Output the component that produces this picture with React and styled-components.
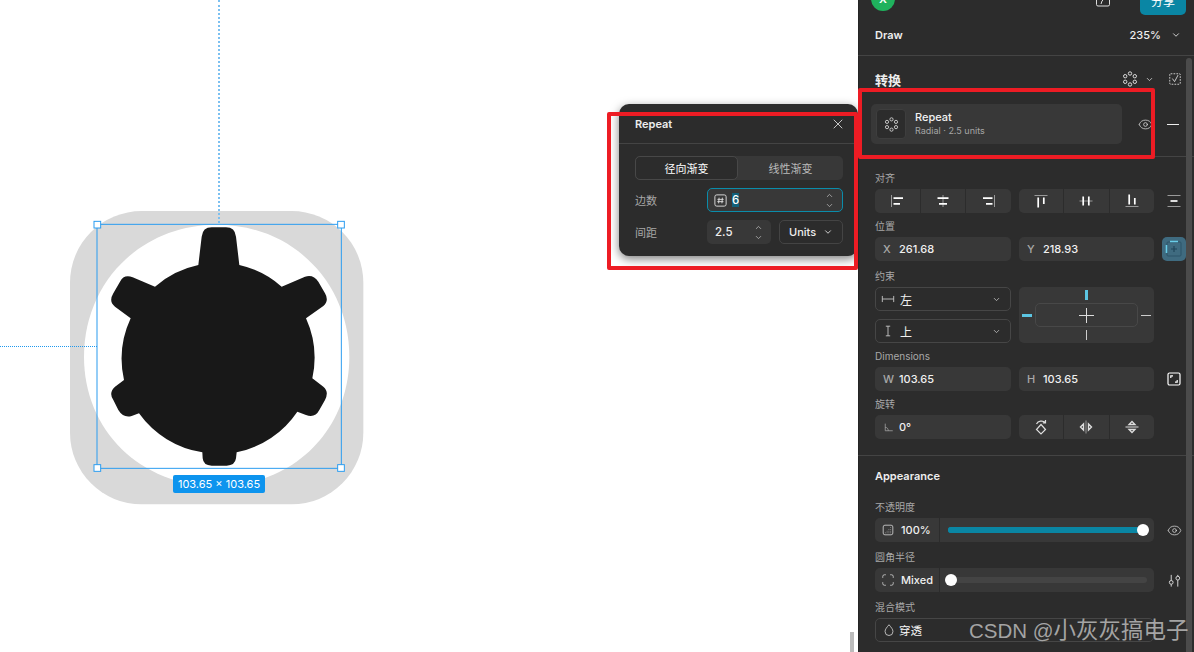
import styled, { createGlobalStyle } from "styled-components";
import { ChevronDown, ChevronUp, Eye, X } from "lucide-react";

const GlobalStyle = createGlobalStyle`
  html, body { margin: 0; padding: 0; height: 100%; background: #fff; overflow: hidden; }
  * { box-sizing: border-box; }
  #root { height: 100%; }
  body { font-family: Inter, "Noto Sans CJK SC", sans-serif; -webkit-font-smoothing: antialiased; }
`;

const Ico = ({ size = 16, children, sw = 1 }) => (
  <svg width={size} height={size} viewBox="0 0 16 16" fill="none" stroke="currentColor" strokeWidth={sw} style={{ flex: "none", display: "block" }}>
    {children}
  </svg>
);

const RadialIcon = ({ size = 16 }) => (
  <Ico size={size}>
    {[[8, 2.5], [12.8, 5.2], [12.8, 10.8], [8, 13.5], [3.2, 10.8], [3.2, 5.2]].map(([cx, cy]) => (
      <circle key={cx + "-" + cy} cx={cx} cy={cy} r="1.7" />
    ))}
  </Ico>
);

const Rule = ({ d }) => <path d={d} stroke="#999" strokeWidth="1" />;
const Bars = ({ d }) => <path d={d} stroke="#fff" strokeWidth="1.7" />;

const icons = {
  alignLeft: <><Rule d="M2.5 2v12" /><Bars d="M4.5 5.2h9.5M4.5 10.800h6.500" /></>,
  alignCenterH: <><Rule d="M8 2v12" /><Bars d="M2.500 5.200h11M4 10.800h8" /></>,
  alignRight: <><Rule d="M13.500 2v12" /><Bars d="M2 5.200h9.500M5 10.800h6.500" /></>,
  alignTop: <><Rule d="M1.500 2.500h13" /><Bars d="M5.200 4.500v10M10.800 4.500v6.500" /></>,
  alignCenterV: <><Rule d="M1.500 8h13" /><Bars d="M5.200 3.500v9M10.800 3.500v9" /></>,
  alignBottom: <><Rule d="M1.500 13.500h13" /><Bars d="M5.200 1.500v10M10.800 5v6.500" /></>,
  distribute: <><Rule d="M1.500 2.500h13M1.500 13.500h13" /><Bars d="M4.500 8h7" /></>,
  horizontal: <path d="M1.500 4.500v7M14.500 4.500v7M1.500 8h13" />,
  vertical: <path d="M5.500 2.500h5M5.500 13.500h5M8 2.500v11" />,
  angle: <><path d="M3 3.500v9.500h10" /><path d="M3 8.500c2.500 0 4 1.800 4 4.500" /></>,
  rotate: <><path d="M8 5.500l4.500 5L8 15l-4.500-4.500z" strokeWidth="1.200" /><path d="M3.500 5C5 2 9.500 1 12.500 3.500M12.500 1v2.800H9.800" strokeWidth="1.200" /></>,
  flipH: <><Rule d="M8 1.500v13" /><path d="M5.500 5v6L2.500 8zM10.500 5v6l3-3z" strokeWidth="1.400" /></>,
  flipV: <><path d="M1.500 8h13" /><path d="M5 5.500h6L8 2.500zM5 10.500h6l-3 3z" strokeWidth="1.300" /></>,
  corners: <><rect x="2" y="2" width="12" height="12" rx="1.500" strokeWidth="1.200" stroke="#fff" /><path d="M4.800 7V4.800H7M11.200 9v2.200H9" stroke="#fff" strokeWidth="1.200" /></>,
  opacity: <><rect x="2.500" y="2.500" width="11" height="11" rx="2" /><path d="M11 5v.6M9 7v.6M11 7v.6M7 9v.6M9 9v.6M11 9v.6M5 11v.6M7 11v.6M9 11v.6M11 11v.6" /></>,
  radius: <path d="M2 5.500V4a2 2 0 0 1 2-2h1.500M10.500 2H12a2 2 0 0 1 2 2v1.500M14 10.500V12a2 2 0 0 1-2 2h-1.500M5.500 14H4a2 2 0 0 1-2-2v-1.500" />,
  sliders: <><path d="M4.500 2v6M4.500 12v2.500M11.500 2v1.500M11.500 7.500V14.500" /><circle cx="4.500" cy="10" r="2" /><circle cx="11.500" cy="5.500" r="2" /></>,
  drop: <path d="M8 2c2.500 3 4.500 5.200 4.500 7.800a4.500 4.500 0 0 1-9 0C3.500 7.200 5.500 5 8 2z" />,
  hash: <><rect x="2" y="2" width="12" height="12" rx="2" /><path d="M6.500 5l-.5 6M10 5l-.5 6M4.800 6.800h6.500M4.600 9.200h6.500" /></>,
  check: <><rect x="2" y="2" width="12" height="12" rx="1" strokeDasharray="2 1.300" /><path d="M5 7.500L7.500 11 11.500 3.500" /></>,
  edit: <><rect x="1.500" y="-4" width="13" height="13" rx="1.500" /><path d="M6 7l1-3 4-4" /></>,
};

const Icon = ({ name, size, sw }) => <Ico size={size} sw={sw}>{icons[name]}</Ico>;

const App = () => (
  <>
    <GlobalStyle />
    <Page>
      <Canvas>
        <Artwork viewBox="0 0 930 930" width="310" height="310">
          <rect x="30" y="33" width="880" height="880" rx="215" fill="#d9d9d9" />
          <path d="M470 74C700 74 868 250 868 470C868 690 700 858 470 858C240 858 72 690 72 470C72 250 240 74 470 74Z" fill="#fff" />
          <path
            d="M415 195L425 110Q428 82 455 82L498 82Q525 82 528 110L538 195A288 288 0 0 1 665 260L735 230Q760 222 775 245L795 280Q808 302 790 318L738 355A288 288 0 0 1 757 535L790 560Q808 575 795 600L778 630Q765 655 738 645L712 635A288 288 0 0 1 530 757L528 775Q525 797 500 797L455 797Q430 797 428 775L427 757A288 288 0 0 1 237 640L215 648Q190 655 175 630L160 600Q145 578 165 560L192 540A288 288 0 0 1 212 355L165 320Q145 305 160 280L180 245Q192 222 218 232L285 260A288 288 0 0 1 415 195Z"
            fill="#181818"
          />
          <rect x="111" y="73" width="733" height="732" fill="none" stroke="#2b9cf0" strokeWidth="3" />
          {[[112, 74], [843, 74], [112, 804], [843, 804]].map(([x, y]) => (
            <rect key={x + "-" + y} x={x - 10} y={y - 10} width="20" height="20" fill="#fff" stroke="#2b9cf0" strokeWidth="3" />
          ))}
        </Artwork>
        <GuideV />
        <GuideH />
        <SizeBadge>103.65 × 103.65</SizeBadge>
        <CanvasScroll />

        <Popup>
          <PopupHead>
            <PopupTitle>Repeat</PopupTitle>
            <X size={16} strokeWidth={1.2} color="#eee" />
          </PopupHead>
          <PopupBody>
            <Segment>
              <SegmentItem $active>径向渐变</SegmentItem>
              <SegmentItem>线性渐变</SegmentItem>
            </Segment>
            <PopupRow>
              <PopupLabel>边数</PopupLabel>
              <CountInput>
                <Icon name="hash" size={15} />
                <Selected>6</Selected>
                <Stepper><ChevronUp size={9} /><ChevronDown size={9} /></Stepper>
              </CountInput>
            </PopupRow>
            <PopupRow>
              <PopupLabel>间距</PopupLabel>
              <SpacingInput>
                2.5
                <Stepper><ChevronUp size={9} /><ChevronDown size={9} /></Stepper>
              </SpacingInput>
              <UnitSelect>Units<ChevronDown size={10} /></UnitSelect>
            </PopupRow>
          </PopupBody>
        </Popup>
        <RedBox $left={607} $top={112} $width={251} $height={158} />
      </Canvas>

      <Panel>
        <TopBar>
          <Avatar>X</Avatar>
          <Spacer />
          <EditSlot><Icon name="edit" size={16} /></EditSlot>
          <TopCaret><ChevronDown size={9} /></TopCaret>
          <ShareButton>分享</ShareButton>
        </TopBar>
        <DrawRow>
          <DrawName>Draw</DrawName>
          <Zoom>235%<ChevronDown size={10} /></Zoom>
        </DrawRow>

        <Section $pb={12}>
          <HeadRow>
            <Heading>转换</Heading>
            <HeadIcons>
              <RadialIcon size={16} />
              <ChevronDown size={9} />
              <Icon name="check" size={14} />
            </HeadIcons>
          </HeadRow>
          <EffectRow>
            <EffectCard>
              <EffectThumb><RadialIcon size={15} /></EffectThumb>
              <div>
                <EffectName>Repeat</EffectName>
                <EffectMeta>Radial · 2.5 units</EffectMeta>
              </div>
            </EffectCard>
            <Eye size={15} strokeWidth={1.2} color="#ddd" />
            <MinusBar />
          </EffectRow>
        </Section>

        <Section $pb={16}>
          <Label $h={32}>对齐</Label>
          <Row>
            <Pair>
              <ButtonGroup>
                <IconCell><Icon name="alignLeft" /></IconCell>
                <IconCell><Icon name="alignCenterH" /></IconCell>
                <IconCell><Icon name="alignRight" /></IconCell>
              </ButtonGroup>
              <ButtonGroup>
                <IconCell><Icon name="alignTop" /></IconCell>
                <IconCell><Icon name="alignCenterV" /></IconCell>
                <IconCell><Icon name="alignBottom" /></IconCell>
              </ButtonGroup>
            </Pair>
            <Trailing><Icon name="distribute" /></Trailing>
          </Row>

          <Label>位置</Label>
          <Row>
            <Pair>
              <Field><FieldKey>X</FieldKey>261.68</Field>
              <Field><FieldKey>Y</FieldKey>218.93</Field>
            </Pair>
            <ConstrainButton>
              <svg width="20" height="20" viewBox="0 0 20 20" fill="none">
                <rect x="3" y="3" width="14" height="14" rx="1" stroke="#2c5569" strokeWidth="1" />
                <path d="M6 2.500h8M2.500 6v8" stroke="#69cde8" strokeWidth="1.600" />
                <path d="M7 10h6M10 7v6" stroke="#21475a" strokeWidth="1.200" />
              </svg>
            </ConstrainButton>
          </Row>

          <Label $h={26}>约束</Label>
          <Row>
            <Pair>
              <SelectStack>
                <SelectField>
                  <Icon name="horizontal" size={14} /><SelectText>左</SelectText><ChevronDown size={9} />
                </SelectField>
                <SelectField>
                  <Icon name="vertical" size={14} /><SelectText>上</SelectText><ChevronDown size={9} />
                </SelectField>
              </SelectStack>
              <ConstraintBox>
                <ConstraintInner>
                  <svg width="15" height="15" viewBox="0 0 15 15" stroke="#ddd" strokeWidth="1"><path d="M7.500 0v15M0 7.500h15" /></svg>
                </ConstraintInner>
                <Pin $side="top" $on />
                <Pin $side="bottom" />
                <Pin $side="left" $on />
                <Pin $side="right" />
              </ConstraintBox>
            </Pair>
          </Row>

          <Label>Dimensions</Label>
          <Row>
            <Pair>
              <Field><FieldKey>W</FieldKey>103.65</Field>
              <Field><FieldKey>H</FieldKey>103.65</Field>
            </Pair>
            <Trailing><Icon name="corners" /></Trailing>
          </Row>

          <Label>旋转</Label>
          <Row>
            <Pair>
              <Field><FieldKey><Icon name="angle" size={12} /></FieldKey>0°</Field>
              <ButtonGroup>
                <IconCell><Icon name="rotate" /></IconCell>
                <IconCell><Icon name="flipH" /></IconCell>
                <IconCell><Icon name="flipV" /></IconCell>
              </ButtonGroup>
            </Pair>
          </Row>
        </Section>

        <Section>
          <AppearanceTitle>Appearance</AppearanceTitle>
          <Label $h={22}>不透明度</Label>
          <Row>
            <SliderField>
              <SliderValue><Icon name="opacity" size={14} /><span>100%</span></SliderValue>
              <Track>
                <TrackFill style={{ width: "98%" }} />
                <Thumb style={{ left: "98%" }} />
              </Track>
            </SliderField>
            <Trailing><Eye size={15} strokeWidth={1.2} color="#ddd" /></Trailing>
          </Row>
          <Label $h={26}>圆角半径</Label>
          <Row>
            <SliderField>
              <SliderValue><Icon name="radius" size={14} /><span>Mixed</span></SliderValue>
              <Track $dim>
                <Thumb style={{ left: "3px" }} />
              </Track>
            </SliderField>
            <Trailing><Icon name="sliders" size={15} /></Trailing>
          </Row>
          <Label $h={26}>混合模式</Label>
          <Row>
            <BlendField><Icon name="drop" size={14} /><BlendText>穿透</BlendText></BlendField>
          </Row>
        </Section>

        <PanelScroll />
        <RedBox $left={0} $top={88} $width={297} $height={71} />
        <Watermark>CSDN @<WatermarkCjk>小灰灰搞电子</WatermarkCjk></Watermark>
      </Panel>
    </Page>
  </>
);

export default App;

const Page = styled.div`
  display: flex;
  width: 1194px;
  height: 652px;
  overflow: hidden;
`;

const Canvas = styled.main`
  position: relative;
  flex: 1;
  background: #fff;
`;

const GuideV = styled.div`
  position: absolute;
  left: 218px;
  top: 0;
  height: 223px;
  border-left: 2px dotted #7cc0f0;
`;

const GuideH = styled.div`
  position: absolute;
  left: 0;
  top: 346px;
  width: 97px;
  border-top: 1px dotted #1e98ee;
`;

const Artwork = styled.svg`
  position: absolute;
  left: 60px;
  top: 200px;
`;

const SizeBadge = styled.div`
  position: absolute;
  left: 173px;
  top: 475px;
  width: 92px;
  height: 18px;
  border-radius: 2px;
  background: #0d94ee;
  color: #fff;
  font-size: 11px;
  line-height: 18px;
  text-align: center;
  white-space: nowrap;
`;

const CanvasScroll = styled.div`
  position: absolute;
  left: 850px;
  top: 632px;
  width: 4px;
  height: 20px;
  background: #bbb;
`;

const Popup = styled.section`
  position: absolute;
  left: 619px;
  top: 104px;
  width: 239px;
  height: 152px;
  border-radius: 10px;
  background: #2c2c2c;
  color: #eee;
  box-shadow: 0 3px 10px rgba(0, 0, 0, 0.5);
`;

const PopupHead = styled.header`
  display: flex;
  align-items: center;
  justify-content: space-between;
  height: 40px;
  padding: 0 12px 0 16px;
  border-bottom: 1px solid #444;
`;

const PopupTitle = styled.h3`
  margin: 0;
  font-size: 11px;
  font-weight: 600;
`;

const PopupBody = styled.div`
  display: flex;
  flex-direction: column;
  gap: 8px;
  padding: 12px 15px 0 16px;
`;

const Segment = styled.div`
  display: grid;
  grid-template-columns: 103px 1fr;
  height: 24px;
  border-radius: 5px;
  background: #383838;
`;

const SegmentItem = styled.div`
  display: flex;
  align-items: center;
  justify-content: center;
  border-radius: 5px;
  font-size: 11px;
  color: ${(p) => (p.$active ? "#fff" : "#bbb")};
  background: ${(p) => (p.$active ? "#2c2c2c" : "transparent")};
  border: ${(p) => (p.$active ? "1px solid #484848" : "none")};
`;

const PopupRow = styled.div`
  display: flex;
  align-items: center;
  gap: 8px;
  height: 24px;
`;

const PopupLabel = styled.span`
  width: 64px;
  font-size: 11px;
  color: #a8a8a8;
`;

const CountInput = styled.div`
  display: flex;
  align-items: center;
  gap: 4px;
  width: 136px;
  height: 24px;
  padding: 0 8px 0 5px;
  border: 1px solid #0a8caa;
  border-radius: 5px;
  background: #383838;
  color: #ddd;
`;

const Selected = styled.span`
  flex: 1;
  font-size: 11.5px;
  font-weight: 500;
  color: #fff;
  background: linear-gradient(#12607a, #12607a) no-repeat 0 0 / 7px 100%;
`;

const Stepper = styled.div`
  display: flex;
  flex-direction: column;
  gap: 1px;
  color: #bbb;
`;

const SpacingInput = styled.div`
  display: flex;
  align-items: center;
  justify-content: space-between;
  width: 64px;
  height: 24px;
  padding: 0 8px;
  border-radius: 5px;
  background: #383838;
  font-size: 11.5px;
  font-weight: 500;
`;

const UnitSelect = styled.div`
  display: flex;
  align-items: center;
  justify-content: space-between;
  width: 64px;
  height: 24px;
  padding: 0 9px;
  border: 1px solid #444;
  border-radius: 5px;
  font-size: 11px;
  font-weight: 500;
`;

const RedBox = styled.div`
  position: absolute;
  left: ${(p) => p.$left}px;
  top: ${(p) => p.$top}px;
  width: ${(p) => p.$width}px;
  height: ${(p) => p.$height}px;
  border: 4px solid #ed1c24;
  border-radius: 2px;
  pointer-events: none;
`;

const Panel = styled.aside`
  position: relative;
  flex: none;
  width: 336px;
  height: 652px;
  background: #2c2c2c;
  box-shadow: inset 1px 0 0 #252525;
  color: #eee;
  overflow: hidden;
`;

const TopBar = styled.div`
  display: flex;
  align-items: flex-end;
  height: 15px;
  padding: 0 8px 0 13px;
  overflow: hidden;
  color: #ddd;
`;

const Avatar = styled.div`
  flex: none;
  display: flex;
  align-items: center;
  justify-content: center;
  width: 24px;
  height: 24px;
  margin-bottom: 4px;
  border-radius: 50%;
  background: #1fb25d;
  color: #fff;
  font-size: 11px;
  font-weight: 600;
`;

const Spacer = styled.div`
  flex: 1;
`;

const EditSlot = styled.div`
  margin-bottom: 2px;
`;

const TopCaret = styled.span`
  display: flex;
  justify-content: center;
  align-self: flex-start;
  width: 29px;
  margin-top: -7px;
`;

const ShareButton = styled.div`
  flex: none;
  display: flex;
  align-items: flex-end;
  justify-content: center;
  width: 46px;
  height: 30px;
  padding-bottom: 6px;
  border-radius: 5px;
  background: #0a86a4;
  color: #fff;
  font-size: 12px;
  line-height: 14px;
`;

const DrawRow = styled.div`
  display: flex;
  align-items: center;
  justify-content: space-between;
  height: 41px;
  padding: 0 13px 0 17px;
  border-bottom: 1px solid #444;
  font-size: 11px;
`;

const DrawName = styled.span`
  font-weight: 600;
`;

const Zoom = styled.span`
  display: flex;
  align-items: center;
  gap: 10px;
  font-size: 11px;
  font-weight: 500;
`;

const Section = styled.section`
  padding: 0 0 ${(p) => p.$pb || 0}px 17px;
  border-bottom: ${(p) => (p.$pb ? "1px solid #444" : "none")};
`;

const HeadRow = styled.div`
  display: flex;
  align-items: center;
  justify-content: space-between;
  height: 48px;
  padding: 0 12px 2px 0;
`;

const Heading = styled.h2`
  margin: 0;
  font-size: 13px;
  font-weight: 700;
`;

const HeadIcons = styled.div`
  display: flex;
  align-items: center;
  gap: 7px;
  color: #ddd;
  & > :last-child {
    margin-left: 7px;
  }
`;

const EffectRow = styled.div`
  display: flex;
  align-items: center;
  height: 40px;
  margin-left: -4px;
  color: #ddd;
  & > svg {
    margin-left: 16px;
  }
`;

const EffectCard = styled.div`
  display: flex;
  align-items: center;
  gap: 9px;
  width: 251px;
  height: 40px;
  padding-left: 5px;
  border-radius: 5px;
  background: #383838;
`;

const EffectThumb = styled.div`
  display: flex;
  align-items: center;
  justify-content: center;
  width: 30px;
  height: 30px;
  border: 1px solid #3e3e3e;
  border-radius: 4px;
  background: #2c2c2c;
  color: #ccc;
`;

const EffectName = styled.div`
  font-size: 11px;
  font-weight: 500;
  line-height: 14px;
  color: #f2f2f2;
`;

const EffectMeta = styled.div`
  font-size: 9px;
  line-height: 14px;
  color: #a6a6a6;
`;

const MinusBar = styled.div`
  width: 12px;
  height: 1px;
  margin-left: 14px;
  background: #eee;
`;

const Label = styled.div`
  display: flex;
  align-items: flex-end;
  height: ${(p) => p.$h || 24}px;
  padding-bottom: 4px;
  font-size: 10px;
  line-height: 14px;
  color: #a8a8a8;
`;

const Row = styled.div`
  display: flex;
  align-items: center;
  gap: 8px;
`;

const Pair = styled.div`
  display: grid;
  grid-template-columns: 136px 135px;
  gap: 8px;
  width: 279px;
`;

const ButtonGroup = styled.div`
  display: grid;
  grid-template-columns: repeat(3, 1fr);
  gap: 1px;
  height: 24px;
  border-radius: 5px;
  overflow: hidden;
`;

const IconCell = styled.div`
  display: flex;
  align-items: center;
  justify-content: center;
  background: #383838;
  color: #ddd;
`;

const Trailing = styled.div`
  display: flex;
  align-items: center;
  justify-content: center;
  width: 24px;
  height: 24px;
  color: #ddd;
`;

const Field = styled.div`
  display: flex;
  align-items: center;
  height: 24px;
  padding-left: 8px;
  border-radius: 5px;
  background: #383838;
  font-size: 11px;
  font-weight: 500;
  color: #f0f0f0;
`;

const FieldKey = styled.span`
  width: 16px;
  color: #a8a8a8;
  font-size: 11px;
`;

const ConstrainButton = styled.div`
  display: flex;
  align-items: center;
  justify-content: center;
  width: 24px;
  height: 24px;
  border-radius: 5px;
  background: #3f6b80;
`;

const SelectStack = styled.div`
  display: flex;
  flex-direction: column;
  gap: 8px;
`;

const SelectField = styled.div`
  display: flex;
  align-items: center;
  height: 24px;
  padding: 0 9px 0 5px;
  border: 1px solid #464646;
  border-radius: 5px;
  color: #ccc;
`;

const SelectText = styled.span`
  flex: 1;
  padding-left: 5px;
  font-size: 12px;
  color: #f0f0f0;
`;

const ConstraintBox = styled.div`
  position: relative;
  display: flex;
  align-items: center;
  justify-content: center;
  height: 56px;
  border-radius: 5px;
  background: #383838;
`;

const ConstraintInner = styled.div`
  display: flex;
  align-items: center;
  justify-content: center;
  width: 103px;
  height: 24px;
  border: 1px solid #484848;
  border-radius: 5px;
`;

const pinPlace = {
  top: "left: 66px; top: 3px; width: 3px; height: 10px;",
  bottom: "left: 67px; bottom: 3px; width: 1px; height: 10px;",
  left: "left: 3px; top: 27px; width: 10px; height: 3px;",
  right: "right: 3px; top: 28px; width: 10px; height: 1px;",
};

const Pin = styled.span`
  position: absolute;
  ${(p) => pinPlace[p.$side]}
  background: ${(p) => (p.$on ? "#5cc5e2" : "#ccc")};
`;

const AppearanceTitle = styled.h3`
  display: flex;
  align-items: center;
  height: 40px;
  margin: 0;
  font-size: 11px;
  font-weight: 600;
`;

const SliderField = styled.div`
  display: flex;
  align-items: center;
  width: 279px;
  height: 24px;
  border-radius: 5px;
  background: #383838;
`;

const SliderValue = styled.div`
  display: flex;
  align-items: center;
  gap: 6px;
  width: 65px;
  height: 24px;
  padding-left: 6px;
  border-right: 1px solid #2c2c2c;
  color: #ccc;
  & > span {
    font-size: 11px;
    font-weight: 500;
    color: #f0f0f0;
  }
`;

const Track = styled.div`
  position: relative;
  width: 199px;
  height: 6px;
  margin-left: 8px;
  border-radius: 3px;
  background: ${(p) => (p.$dim ? "#444" : "#0a86a4")};
`;

const TrackFill = styled.div`
  height: 100%;
  border-radius: 3px;
  background: #0a86a4;
`;

const Thumb = styled.span`
  position: absolute;
  top: -3px;
  width: 12px;
  height: 12px;
  margin-left: -6px;
  border-radius: 50%;
  background: #fff;
`;

const BlendField = styled.div`
  display: flex;
  align-items: center;
  gap: 3px;
  width: 279px;
  height: 24px;
  padding-left: 6px;
  border: 1px solid #464646;
  border-radius: 5px;
  color: #ccc;
`;

const BlendText = styled.span`
  font-size: 11.5px;
  color: #f8f8f8;
`;

const PanelScroll = styled.div`
  position: absolute;
  left: 328px;
  top: 58px;
  width: 6px;
  height: 594px;
  border-radius: 3px 3px 0 0;
  background: #4b4b4b;
`;

const Watermark = styled.div`
  position: absolute;
  left: 111px;
  top: 618px;
  font-family: "Liberation Sans", "Noto Sans CJK SC", sans-serif;
  font-size: 20.500px;
  line-height: 26px;
  white-space: nowrap;
  color: rgba(205, 205, 205, 0.75);
`;

const WatermarkCjk = styled.span`
  font-size: 22.500px;
`;
